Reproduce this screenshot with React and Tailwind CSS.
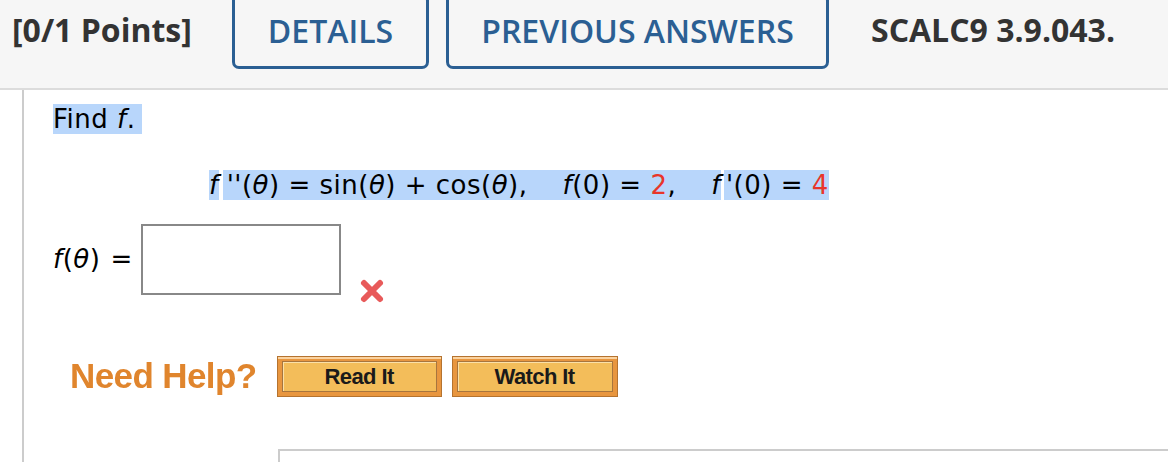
import React from 'react';

const mathFont = { fontFamily: '"DejaVu Sans", Verdana, sans-serif' };

function HeaderTab({ label, className }) {
  return (
    <div
      className={`mt-[-6px] h-[75px] flex items-end justify-center pb-[19px] border-[3px] border-[#2b5f93] rounded-[7px] text-[#2b5f93] font-semibold text-[32px] leading-none ${className}`}
    >
      {label}
    </div>
  );
}

function HelpButton({ label, className }) {
  return (
    <div className={`h-[41px] bg-[#e8963f] border border-[#b5732f] p-[4px] shadow-[inset_0_2px_0_#fbd3a0] ${className}`}>
      <div className="h-full border border-[#a7753e] bg-[#f3bd5a] shadow-[inset_1px_1px_0_#fbe0a8] flex items-center justify-center">
        <span className="text-[22px] font-bold text-[#1a1a1a] tracking-[-0.6px]" style={{ fontFamily: '"Liberation Sans", Arial, sans-serif' }}>
          {label}
        </span>
      </div>
    </div>
  );
}

function WrongMark() {
  return (
    <svg width="28" height="28" viewBox="0 0 28 28" className="blur-[0.4px]">
      <path d="M6 6 L22 22 M22 6 L6 22" stroke="#e85a5a" strokeWidth="6" strokeLinecap="round" />
    </svg>
  );
}

export default function App() {
  return (
    <div className="w-[1168px] h-[462px] overflow-hidden bg-white">
      {/* header bar */}
      <div
        className="h-[90px] bg-[#f6f6f6] border-b-2 border-[#dcdcdc] flex items-start overflow-hidden"
        style={{ fontFamily: '"Open Sans", sans-serif' }}
      >
        <div className="pl-[12px] pt-[10px] text-[32px] font-bold text-[#333] w-[232px] leading-[40px]">[0/1 Points]</div>
        <HeaderTab label="DETAILS" className="w-[197px]" />
        <HeaderTab label="PREVIOUS ANSWERS" className="w-[383px] ml-[17px]" />
        <div className="ml-[42px] pt-[10px] text-[32px] font-bold text-[#333] leading-[40px]">SCALC9 3.9.043.</div>
      </div>

      {/* question body */}
      <div className="flex h-[372px]">
        <div className="w-[22px] shrink-0" />
        <div className="w-[2px] shrink-0 bg-[#cccccc]" />
        <div className="flex-1 pl-[29px] text-black text-[26px] tracking-[0.5px]" style={mathFont}>
          <div className="mt-[11px] leading-[36px]">
            <span className="bg-[#b8d6fb] pr-[7px]">
              Find <i>f</i>.
            </span>
          </div>

          <div className="mt-[30px] ml-[156px] leading-[36px] whitespace-pre">
            <span className="bg-[#b8d6fb]"><i>f</i></span>
            <span className="bg-[#b8d6fb] ml-[4px] pl-[4px]">
              {"''("}<i>θ</i>{") = sin("}<i>θ</i>{") + cos("}<i>θ</i>{"),    "}<i>f</i>{"(0) = "}
              <span className="text-[#e8352a]">2</span>{",    "}<i>f</i>
            </span>
            <span className="bg-[#b8d6fb] ml-[3px] pl-[2px]">
              {"'(0) = "}<span className="text-[#e8352a]">4</span>
            </span>
          </div>

          <div className="mt-[21px] flex items-start">
            <div className="h-[70px] flex items-center whitespace-pre">
              <i>f</i>(<i>θ</i>)<span className="ml-[10px]">=</span>
            </div>
            <div className="ml-[8px] w-[200px] h-[71px] border-2 border-[#888888] bg-white" />
            <div className="ml-[17px] mt-[53px]">
              <WrongMark />
            </div>
          </div>

          <div className="mt-[45px] flex items-center">
            <span
              className="ml-[17px] text-[35px] font-bold text-[#e0852d] tracking-[-0.6px] blur-[0.3px]"
              style={{ fontFamily: '"Liberation Sans", Arial, sans-serif' }}
            >
              Need Help?
            </span>
            <HelpButton label="Read It" className="ml-[20px] w-[165px]" />
            <HelpButton label="Watch It" className="ml-[10px] w-[166px]" />
          </div>

          <div className="mt-[46px] ml-[225px] h-[40px] border-t-2 border-l-2 border-[#cccccc]" />
        </div>
      </div>
    </div>
  );
}
